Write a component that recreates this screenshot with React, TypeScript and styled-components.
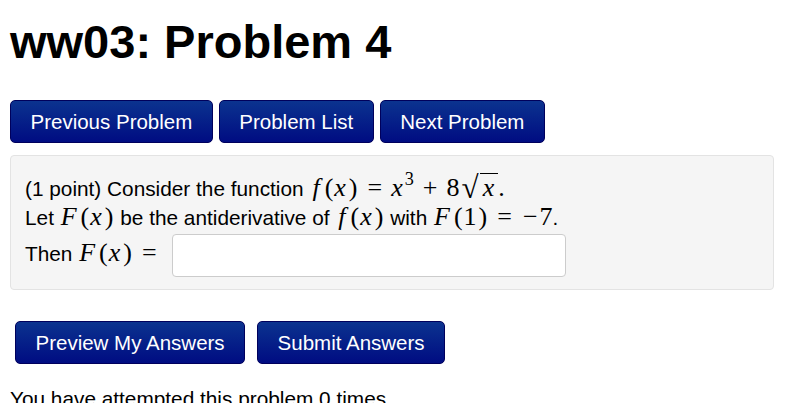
import React from "react";
import styled, { createGlobalStyle } from "styled-components";

const GlobalStyle = createGlobalStyle`
  html, body { margin: 0; padding: 0; background: #fff; }
  body {
    font-family: "Liberation Sans", Arial, sans-serif;
    color: #000;
  }
`;

const Page = styled.div`
  padding: 0 0 0 10px;
`;

const Title = styled.h1`
  margin: 17px 0 0;
  font-size: 47px;
  line-height: 50px;
  font-weight: bold;
`;

const NavBar = styled.div`
  display: flex;
  gap: 6px;
  margin-top: 33px;
`;

const ActionBar = styled.div`
  display: flex;
  gap: 12px;
  margin-top: 31px;
  padding-left: 5px;
`;

const Button = styled.button`
  box-sizing: border-box;
  height: 43px;
  padding: 0 19.5px;
  font-family: "Liberation Sans", Arial, sans-serif;
  font-size: 20.5px;
  color: #fff;
  border: 1px solid #00005c;
  border-radius: 5px;
  background: linear-gradient(to bottom, #0b338f 0%, #000c82 100%);
  white-space: nowrap;
  cursor: pointer;
`;

const ProblemBox = styled.div`
  box-sizing: border-box;
  width: 764px;
  margin-top: 12px;
  padding: 17px 14px 10px;
  background: #f5f5f5;
  border: 1px solid #e3e3e3;
  border-radius: 4px;
  font-size: 20.8px;
  line-height: 29px;
`;

const Line = styled.div``;

const Math = styled.span`
  font-family: "Liberation Serif", "Times New Roman", serif;
  font-size: 26px;
  line-height: 1;
  white-space: nowrap;
`;

const Mi = styled.span<{ $after?: number; $before?: number }>`
  font-style: italic;
  margin-left: ${(p) => p.$before ?? 0}px;
  margin-right: ${(p) => p.$after ?? 2}px;
`;

const Mn = styled.span<{ $after?: number }>`
  margin-right: ${(p) => p.$after ?? 0}px;
`;

const Mo = styled.span<{ $space?: number }>`
  margin: 0 ${(p) => p.$space ?? 0}px;
`;

const Paren = styled.span`
  margin: 0 1px;
`;

const Sup = styled.span`
  font-size: 0.7em;
  vertical-align: 0.6em;
  line-height: 0;
  margin-left: 2px;
`;

const Radical = styled.span`
  display: inline-block;
  font-size: 1.2em;
  line-height: 0;
  vertical-align: -2px;
  margin: 0 1px 0 2px;
`;

const Radicand = styled.span`
  display: inline-block;
  border-top: 1.3px solid #000;
  padding: 1px 4px 0 3px;
  line-height: 1;
  font-style: italic;
`;

const AnswerInput = styled.input`
  box-sizing: border-box;
  width: 394px;
  height: 43px;
  margin: 2px 0 2px 6px;
  vertical-align: middle;
  border: 1px solid #cccccc;
  border-radius: 4px;
  background: #fff;
  font-size: 18px;
  padding: 0 8px;
`;

const Attempts = styled.p`
  margin: 20px 0 0;
  font-size: 20.8px;
  line-height: 29px;
`;

function Fx({ name }: { name: string }) {
  return (
    <>
      <Mi $before={name === "f" ? 3 : 1} $after={name === "f" ? 4 : 3}>
        {name}
      </Mi>
      <Paren>(</Paren>
      <Mi>x</Mi>
      <Paren>)</Paren>
    </>
  );
}

export default function App() {
  return (
    <Page>
      <GlobalStyle />
      <Title>ww03: Problem 4</Title>
      <NavBar>
        <Button>Previous Problem</Button>
        <Button>Problem List</Button>
        <Button>Next Problem</Button>
      </NavBar>
      <ProblemBox>
        <Line>
          (1 point) Consider the function{" "}
          <Math>
            <Fx name="f" />
            <Mo $space={9}>=</Mo>
            <Mi $after={0}>x</Mi>
            <Sup>3</Sup>
            <Mo $space={9}>+</Mo>
            <Mn>8</Mn>
            <Radical>√</Radical>
            <Radicand>x</Radicand>
            <Mn>.</Mn>
          </Math>
        </Line>
        <Line>
          Let{" "}
          <Math>
            <Fx name="F" />
          </Math>{" "}
          be the antiderivative of{" "}
          <Math>
            <Fx name="f" />
          </Math>{" "}
          with{" "}
          <Math>
            <Mi $before={1} $after={3}>F</Mi>
            <Paren>(</Paren>
            <Mn $after={1}>1</Mn>
            <Paren>)</Paren>
            <Mo $space={9}>=</Mo>
            <Mo $space={2}>−</Mo>
            <Mn>7</Mn>
          </Math>
          .
        </Line>
        <Line>
          Then{" "}
          <Math>
            <Fx name="F" />
            <Mo $space={9}>=</Mo>
          </Math>
          <AnswerInput type="text" aria-label="answer" />
        </Line>
      </ProblemBox>
      <ActionBar>
        <Button>Preview My Answers</Button>
        <Button>Submit Answers</Button>
      </ActionBar>
      <Attempts>You have attempted this problem 0 times.</Attempts>
    </Page>
  );
}
